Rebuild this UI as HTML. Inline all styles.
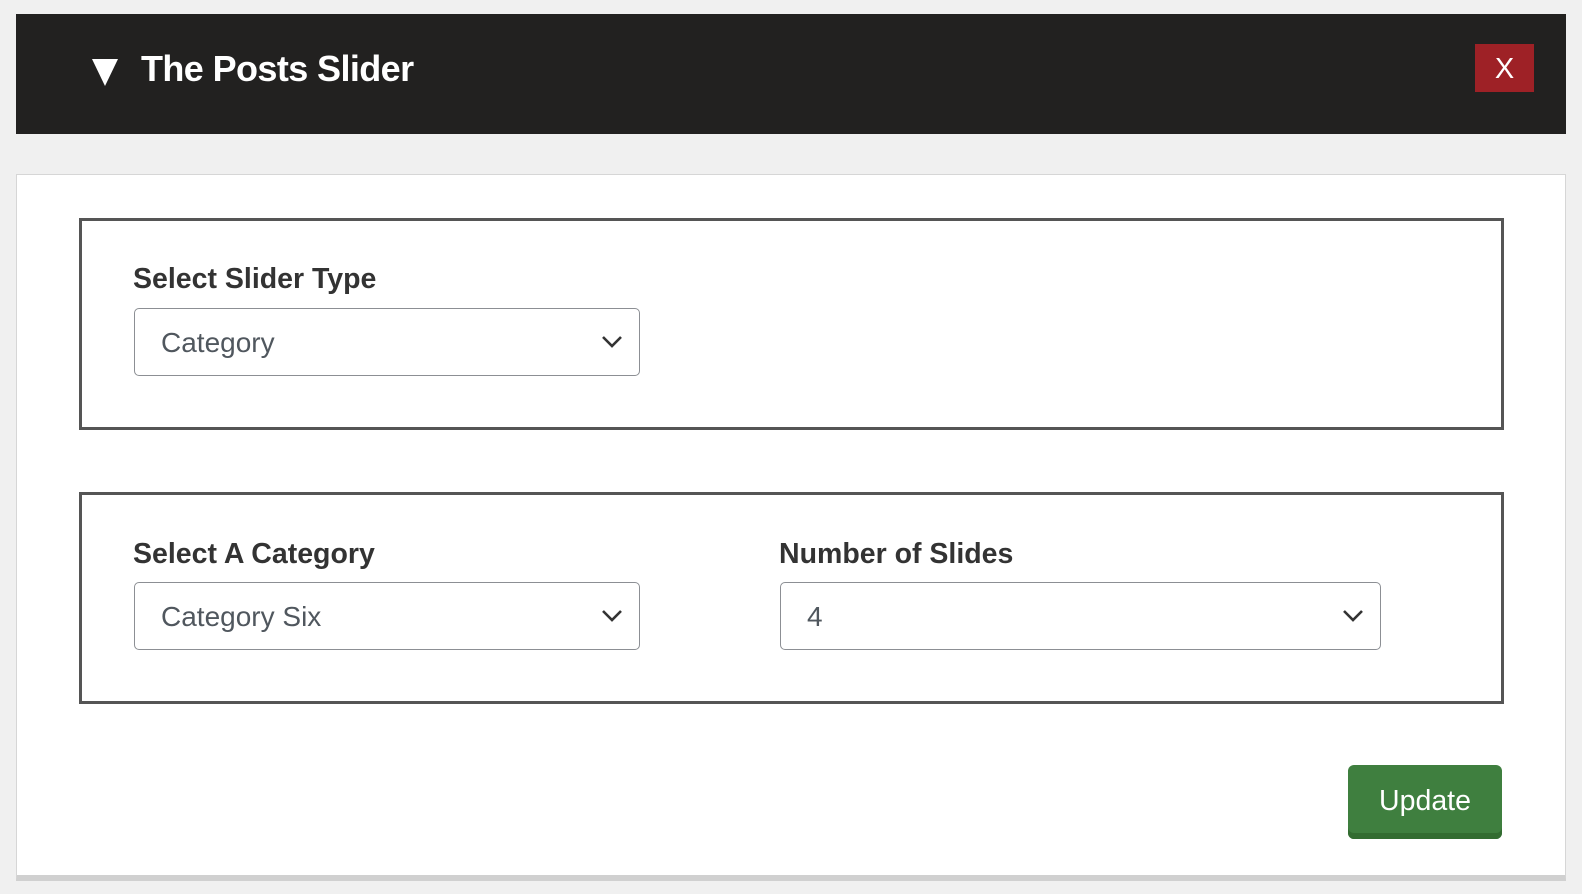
<!DOCTYPE html>
<html><head><style>
body{margin:0;width:1582px;height:894px;background:#f0f0f0;font-family:"Liberation Sans",Arial,sans-serif;position:relative;overflow:hidden}
.hdr{position:absolute;left:16px;top:14px;width:1550px;height:120px;background:#222120}
.tri{position:absolute;left:92px;top:59px;width:0;height:0;border-left:13px solid transparent;border-right:13px solid transparent;border-top:27px solid #fff}
.title{position:absolute;left:141px;top:48px;font-size:36px;font-weight:bold;color:#fff;letter-spacing:-0.6px}
.x{position:absolute;left:1475px;top:44px;width:59px;height:48px;background:#9e2126;color:#fff;font-size:29px;text-align:center;line-height:50px}
.panel{position:absolute;left:16px;top:174px;width:1548px;height:700px;background:#fff;border:1px solid #d6d6d6;border-bottom:6px solid #d0d0d0}
.box{position:absolute;left:79px;width:1425px;border:3px solid #555;box-sizing:border-box;background:#fff}
.lbl{position:absolute;font-size:28.5px;font-weight:bold;color:#333}
.sel{position:absolute;height:68px;border:1.5px solid #8c8f94;border-radius:5px;box-sizing:border-box;font-size:28px;color:#50575e;line-height:67px;padding-left:26px}
.sel svg{position:absolute;right:16px;top:26px}
.btn{position:absolute;left:1348px;top:765px;width:154px;height:74px;background:#3f7f3f;border-radius:6px;box-shadow:inset 0 -6px 0 #336c31;color:#fff;font-size:28.5px;text-align:center;line-height:72px}
</style></head><body>
<div class="hdr"></div>
<div class="tri"></div>
<div class="title">The Posts Slider</div>
<div class="x">X</div>
<div class="panel"></div>
<div class="box" style="top:218px;height:212px"></div>
<div class="lbl" style="left:133px;top:263px">Select Slider Type</div>
<div class="sel" style="left:134px;top:308px;width:506px">Category<svg width="22" height="14" viewBox="0 0 22 14"><path d="M2 2l9 9 9-9" fill="none" stroke="#333" stroke-width="2.6"/></svg></div>
<div class="box" style="top:492px;height:212px"></div>
<div class="lbl" style="left:133px;top:538px">Select A Category</div>
<div class="sel" style="left:134px;top:582px;width:506px">Category Six<svg width="22" height="14" viewBox="0 0 22 14"><path d="M2 2l9 9 9-9" fill="none" stroke="#333" stroke-width="2.6"/></svg></div>
<div class="lbl" style="left:779px;top:538px">Number of Slides</div>
<div class="sel" style="left:780px;top:582px;width:601px">4<svg width="22" height="14" viewBox="0 0 22 14"><path d="M2 2l9 9 9-9" fill="none" stroke="#333" stroke-width="2.6"/></svg></div>
<div class="btn">Update</div>
</body></html>
